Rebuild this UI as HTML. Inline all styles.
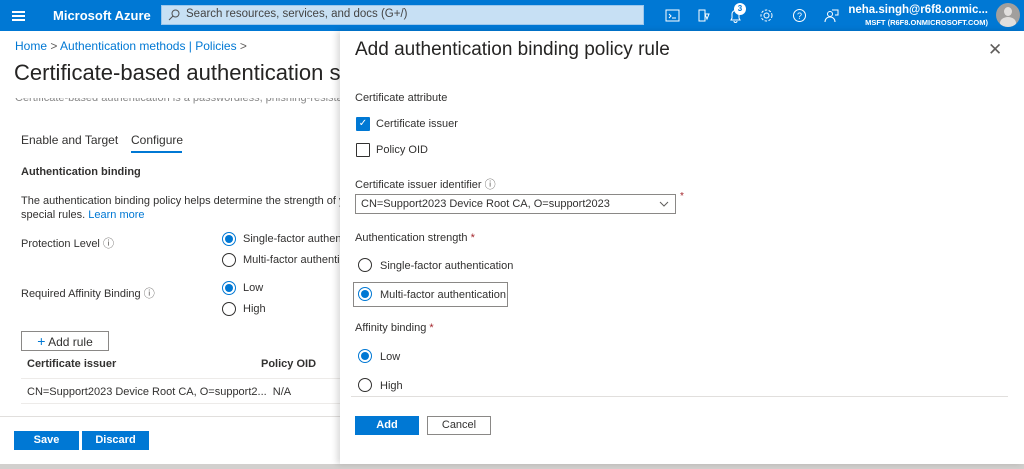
<!DOCTYPE html>
<html><head><meta charset="utf-8"><style>
*{box-sizing:border-box;margin:0;padding:0}
body{width:1024px;height:469px;overflow:hidden;background:#fff;font-family:"Liberation Sans",sans-serif;color:#323130;position:relative;font-size:11px}
.a{position:absolute;white-space:nowrap}
.top{position:absolute;left:0;top:0;width:1024px;height:31px;background:#0078d4}
.rad{position:absolute;width:14px;height:14px;border:1px solid #323130;border-radius:50%;background:#fff}
.rad.on{border-color:#0078d4}
.rad.on::after{content:"";position:absolute;left:2px;top:2px;width:8px;height:8px;border-radius:50%;background:#0078d4}
.btn{position:absolute;font-weight:bold;font-size:11px;color:#fff;background:#0078d4;text-align:center;line-height:19px;height:19px}
.obtn{position:absolute;border:1px solid #8a8886;background:#fff;text-align:center;font-size:11px}
.ic{position:absolute;top:8px;width:15px;height:15px}
</style></head><body>
<div class="top"></div>
<div class="a" style="left:12px;top:11px;width:13px;height:1.5px;background:#fff;box-shadow:0 4px 0 #fff,0 8px 0 #fff"></div>
<div class="a" style="left:53px;top:8px;color:#fff;font-weight:bold;font-size:13px">Microsoft Azure</div>
<div class="a" style="left:161px;top:5px;width:483px;height:20px;background:#c7e0f4;border:1px solid #9cc7ec"></div>
<svg class="a" style="left:168px;top:9px" width="12" height="12" viewBox="0 0 12 12"><circle cx="7.5" cy="4.5" r="3.5" fill="none" stroke="#505050"/><path d="M5 7 L1 11" stroke="#505050"/></svg>
<div class="a" style="left:186px;top:8px;font-size:11.5px;color:#444">Search resources, services, and docs (G+/)</div>
<svg class="ic" style="left:665px" viewBox="0 0 15 15"><rect x="1" y="2" width="13" height="11" fill="none" stroke="#fff"/><path d="M4 6l2 2-2 2M7 10h4" stroke="#fff" fill="none"/></svg>
<svg class="ic" style="left:696px" viewBox="0 0 15 15"><path d="M3 2h6v11H3zM9 6h4l-2 5z" fill="none" stroke="#fff"/></svg>
<svg class="ic" style="left:728px" viewBox="0 0 15 15"><path d="M3 12h9l-1-2V6a3.5 3.5 0 0 0-7 0v4z M6 13a1.5 1.5 0 0 0 3 0" fill="none" stroke="#fff"/></svg>
<div class="a" style="left:734px;top:3px;width:12px;height:12px;border-radius:50%;background:#fff;color:#0078d4;font-size:8px;font-weight:bold;text-align:center;line-height:12px">3</div>
<svg class="ic" style="left:759px" viewBox="0 0 15 15"><circle cx="7.5" cy="7.5" r="2.5" fill="none" stroke="#fff"/><circle cx="7.5" cy="7.5" r="5.5" fill="none" stroke="#fff" stroke-dasharray="2.5 1.5"/></svg>
<svg class="ic" style="left:792px" viewBox="0 0 15 15"><circle cx="7.5" cy="7.5" r="6" fill="none" stroke="#fff"/><text x="7.5" y="11" font-size="9" fill="#fff" text-anchor="middle" font-family="Liberation Sans">?</text></svg>
<svg class="ic" style="left:824px" viewBox="0 0 15 15"><circle cx="6" cy="6" r="2.5" fill="none" stroke="#fff"/><path d="M1 14c0-3 2-5 5-5s5 2 5 5M8 2h6v5h-3" fill="none" stroke="#fff"/></svg>
<div class="a" style="right:36px;top:4px;color:#fff;font-size:11.5px;font-weight:bold;text-align:right">neha.singh@r6f8.onmic...</div>
<div class="a" style="right:36px;top:18px;color:#fff;font-size:7.5px;font-weight:bold">MSFT (R6F8.ONMICROSOFT.COM)</div>
<div class="a" style="left:996px;top:3px;width:24px;height:24px;border-radius:50%;background:#a19f9d;overflow:hidden"><div style="position:absolute;left:8px;top:4px;width:8px;height:9px;border-radius:50%;background:#e1dfdd"></div><div style="position:absolute;left:4px;top:14px;width:16px;height:12px;border-radius:50%;background:#e1dfdd"></div></div>

<div class="a" style="left:15px;top:39px;font-size:12px;color:#0078d4">Home <span style="color:#605e5c">&gt;</span> Authentication methods | Policies <span style="color:#605e5c">&gt;</span></div>
<div class="a" style="left:14px;top:60px;font-size:22px;color:#252423">Certificate-based authentication setti</div>
<div class="a" style="left:15px;top:98px;font-size:11px;color:#888;height:7px;overflow:hidden;line-height:1px">Certificate-based authentication is a passwordless, phishing-resistant au</div>
<div class="a" style="left:21px;top:133px;font-size:12px">Enable and Target</div>
<div class="a" style="left:131px;top:133px;font-size:12px">Configure</div>
<div class="a" style="left:131px;top:151px;width:51px;height:2px;background:#0078d4"></div>
<div class="a" style="left:21px;top:166px;font-size:11px;font-weight:bold">Authentication binding</div>
<div class="a" style="left:21px;top:194px;font-size:11px;line-height:14px">The authentication binding policy helps determine the strength of you<br>special rules. <span style="color:#0078d4">Learn more</span></div>
<div class="a" style="left:21px;top:235px;font-size:11px">Protection Level <span style="color:#605e5c">ⓘ</span></div>
<div class="rad on" style="left:222px;top:232px"></div><div class="a" style="left:243px;top:233px;font-size:11px">Single-factor authent</div>
<div class="rad" style="left:222px;top:253px"></div><div class="a" style="left:243px;top:254px;font-size:11px">Multi-factor authenti</div>
<div class="a" style="left:21px;top:285px;font-size:11px">Required Affinity Binding <span style="color:#605e5c">ⓘ</span></div>
<div class="rad on" style="left:222px;top:281px"></div><div class="a" style="left:243px;top:282px;font-size:11px">Low</div>
<div class="rad" style="left:222px;top:302px"></div><div class="a" style="left:243px;top:303px;font-size:11px">High</div>
<div class="obtn" style="left:21px;top:331px;width:88px;height:20px;line-height:18px;font-size:12px"><span style="color:#0078d4;font-size:14px">+</span> Add rule</div>
<div class="a" style="left:27px;top:358px;font-size:11px;font-weight:bold">Certificate issuer</div>
<div class="a" style="left:261px;top:358px;font-size:11px;font-weight:bold">Policy OID</div>
<div class="a" style="left:21px;top:378px;width:319px;height:1px;background:#edebe9"></div>
<div class="a" style="left:27px;top:386px;font-size:11px">CN=Support2023 Device Root CA, O=support2... &nbsp;N/A</div>
<div class="a" style="left:21px;top:403px;width:319px;height:1px;background:#edebe9"></div>
<div class="a" style="left:0;top:416px;width:340px;height:1px;background:#e1dfdd"></div>
<div class="btn" style="left:14px;top:431px;width:65px">Save</div>
<div class="btn" style="left:82px;top:431px;width:67px">Discard</div>
<div class="a" style="left:0;top:464px;width:1024px;height:5px;background:#d2d0ce"></div>

<div class="a" style="left:340px;top:31px;width:684px;height:433px;background:#fff;box-shadow:-3px 0 6px rgba(0,0,0,.15)"></div>
<div class="a" style="left:355px;top:39px;font-size:19px;color:#252423">Add authentication binding policy rule</div>
<div class="a" style="left:988px;top:40px;font-size:17px;color:#605e5c">✕</div>
<div class="a" style="left:355px;top:92px;font-size:11px">Certificate attribute</div>
<div class="a" style="left:356px;top:117px;width:14px;height:14px;background:#0078d4;color:#fff;font-size:10px;text-align:center;line-height:14px;border-radius:1px">✓</div>
<div class="a" style="left:376px;top:118px;font-size:11px">Certificate issuer</div>
<div class="a" style="left:356px;top:143px;width:14px;height:14px;border:1px solid #323130;border-radius:1px"></div>
<div class="a" style="left:376px;top:144px;font-size:11px">Policy OID</div>
<div class="a" style="left:355px;top:176px;font-size:11px">Certificate issuer identifier <span style="color:#605e5c">ⓘ</span></div>
<div class="a" style="left:355px;top:194px;width:321px;height:20px;border:1px solid #8a8886"></div>
<div class="a" style="left:361px;top:198px;font-size:11px">CN=Support2023 Device Root CA, O=support2023</div>
<svg class="a" style="left:659px;top:200px" width="10" height="8"><path d="M1 2l4 4 4-4" fill="none" stroke="#605e5c"/></svg>
<div class="a" style="left:680px;top:191px;font-size:10px;color:#a4262c">*</div>
<div class="a" style="left:355px;top:232px;font-size:11px">Authentication strength <span style="color:#a4262c">*</span></div>
<div class="rad" style="left:358px;top:258px"></div><div class="a" style="left:380px;top:260px;font-size:11px">Single-factor authentication</div>
<div class="a" style="left:353px;top:282px;width:155px;height:25px;border:1px solid #8a8886"></div>
<div class="rad on" style="left:358px;top:287px"></div><div class="a" style="left:380px;top:289px;font-size:11px">Multi-factor authentication</div>
<div class="a" style="left:355px;top:322px;font-size:11px">Affinity binding <span style="color:#a4262c">*</span></div>
<div class="rad on" style="left:358px;top:349px"></div><div class="a" style="left:380px;top:351px;font-size:11px">Low</div>
<div class="rad" style="left:358px;top:378px"></div><div class="a" style="left:380px;top:380px;font-size:11px">High</div>
<div class="a" style="left:351px;top:396px;width:657px;height:1px;background:#e1dfdd"></div>
<div class="btn" style="left:355px;top:416px;width:64px">Add</div>
<div class="obtn" style="left:427px;top:416px;width:64px;height:19px;line-height:17px">Cancel</div>
</body></html>
